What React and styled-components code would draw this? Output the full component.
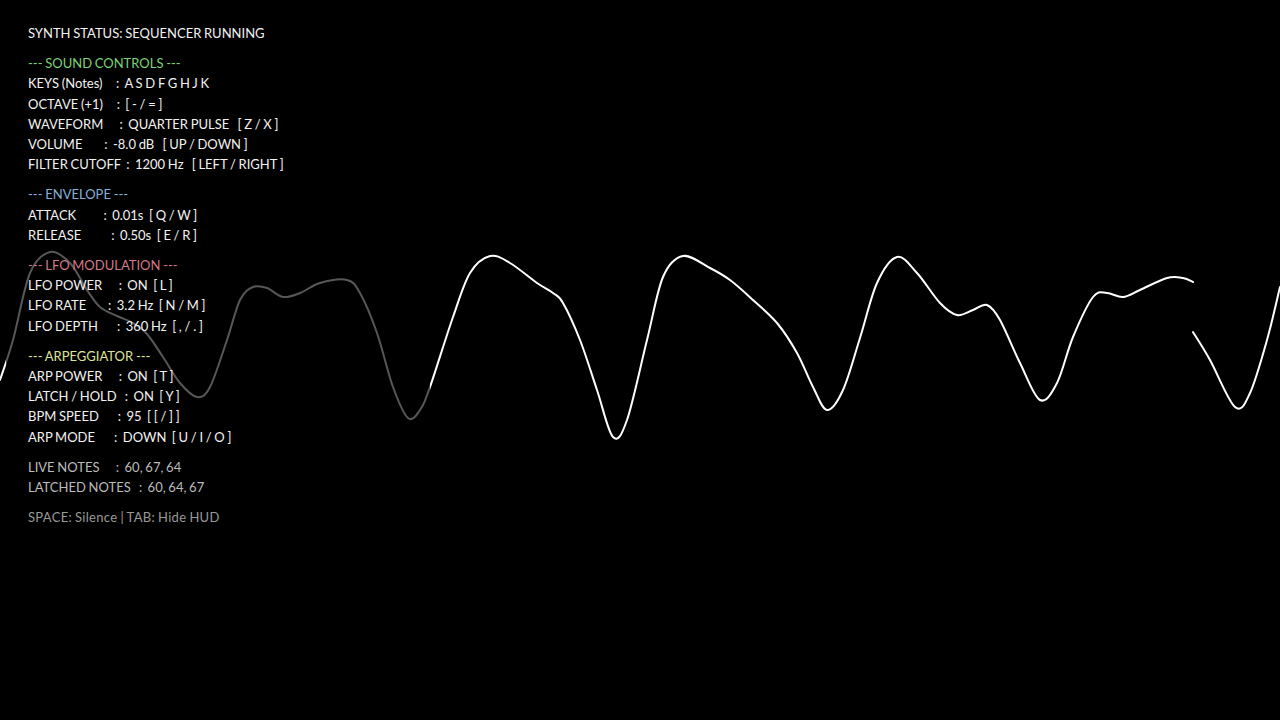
import React from "react";
import styled, { createGlobalStyle } from "styled-components";

const GlobalStyle = createGlobalStyle`
  html, body {
    margin: 0;
    padding: 0;
    background: #000;
  }
`;

const Screen = styled.div`
  position: relative;
  width: 100vw;
  height: 100vh;
  overflow: hidden;
  background: #000;
`;

const Scope = styled.svg`
  position: absolute;
  inset: 0;
  width: 100%;
  height: 100%;
`;

const Hud = styled.div`
  position: absolute;
  top: 6px;
  left: 6px;
  width: 380px;
  padding: 17px 22px 20px;
  background: rgba(0, 0, 0, 0.66);
  font-family: Lato, "Noto Sans", sans-serif;
  font-size: 13px;
  line-height: 20.2px;
  word-spacing: -0.6px;
  color: #f2f2f2;
`;

const Section = styled.div`
  margin-top: 10px;
`;

const Line = styled.div`
  white-space: pre;
  color: ${(p) => p.color || "#f2f2f2"};
  letter-spacing: ${(p) => (p.loose ? "0.3px" : "normal")};
`;

const sections = [
  {
    title: "--- SOUND CONTROLS ---",
    color: "#7ad27a",
    rows: [
      "KEYS (Notes)     :  A S D F G H J K",
      "OCTAVE (+1)     :  [ - / = ]",
      "WAVEFORM      :  QUARTER PULSE   [ Z / X ]",
      "VOLUME        :  -8.0 dB   [ UP / DOWN ]",
      "FILTER CUTOFF  :  1200 Hz   [ LEFT / RIGHT ]",
    ],
  },
  {
    title: "--- ENVELOPE ---",
    color: "#86b0d8",
    rows: [
      "ATTACK          :  0.01s  [ Q / W ]",
      "RELEASE           :  0.50s  [ E / R ]",
    ],
  },
  {
    title: "--- LFO MODULATION ---",
    color: "#d27a88",
    rows: [
      "LFO POWER      :  ON  [ L ]",
      "LFO RATE        :  3.2 Hz  [ N / M ]",
      "LFO DEPTH       :  360 Hz  [ , / . ]",
    ],
  },
  {
    title: "--- ARPEGGIATOR ---",
    color: "#dfe398",
    rows: [
      "ARP POWER      :  ON  [ T ]",
      "LATCH / HOLD   :  ON  [ Y ]",
      "BPM SPEED       :  95  [ [ / ] ]",
      "ARP MODE       :  DOWN  [ U / I / O ]",
    ],
  },
];

const front = [
  [0, 380], [13, 340], [30, 273], [50, 252], [70, 263], [87, 290], [100, 307],
  [117, 316], [133, 323], [147, 334], [163, 357], [180, 383], [197, 397],
  [210, 387], [227, 340], [240, 300], [253, 287], [267, 288], [283, 297],
  [300, 293], [320, 283], [347, 280], [360, 293], [377, 333], [393, 387],
  [408, 418], [420, 410], [430, 387], [453, 317], [470, 273], [490, 256],
  [510, 263], [537, 283], [553, 293], [563, 303], [580, 340], [597, 390],
  [613, 437], [627, 420], [647, 340], [663, 277], [683, 256], [710, 268],
  [730, 280], [753, 300], [777, 323], [797, 353], [813, 387], [827, 410],
  [843, 390], [860, 338], [877, 283], [897, 257], [917, 273], [940, 303],
  [957, 315], [973, 310], [987, 305], [1000, 320], [1020, 363], [1040, 400],
  [1057, 383], [1073, 337], [1093, 297], [1107, 293], [1123, 297],
  [1140, 290], [1167, 278], [1183, 278], [1193, 282],
];
const back = [
  [1193, 332], [1210, 360], [1235, 407], [1250, 393], [1267, 340], [1280, 287],
];

function smooth(pts) {
  let d = `M${pts[0][0]},${pts[0][1]}`;
  for (let i = 0; i < pts.length - 1; i++) {
    const p0 = pts[i - 1] || pts[i];
    const p1 = pts[i];
    const p2 = pts[i + 1];
    const p3 = pts[i + 2] || p2;
    const c1x = p1[0] + (p2[0] - p0[0]) / 6;
    const c1y = p1[1] + (p2[1] - p0[1]) / 6;
    const c2x = p2[0] - (p3[0] - p1[0]) / 6;
    const c2y = p2[1] - (p3[1] - p1[1]) / 6;
    d += ` C${c1x.toFixed(1)},${c1y.toFixed(1)} ${c2x.toFixed(1)},${c2y.toFixed(1)} ${p2[0]},${p2[1]}`;
  }
  return d;
}

function Waveform() {
  return (
    <Scope viewBox="0 0 1280 720" preserveAspectRatio="none">
      <g fill="none" stroke="#fff" strokeWidth="2" strokeLinecap="round" strokeLinejoin="round">
        <path d={smooth(front)} />
        <path d={smooth(back)} />
      </g>
    </Scope>
  );
}

export default function App() {
  return (
    <Screen>
      <GlobalStyle />
      <Waveform />
      <Hud>
        <Line>SYNTH STATUS: SEQUENCER RUNNING</Line>
        {sections.map((s) => (
          <Section key={s.title}>
            <Line color={s.color}>{s.title}</Line>
            {s.rows.map((r) => (
              <Line key={r}>{r}</Line>
            ))}
          </Section>
        ))}
        <Section>
          <Line color="#bcbcbc">LIVE NOTES      :  60, 67, 64</Line>
          <Line color="#bcbcbc">LATCHED NOTES   :  60, 64, 67</Line>
        </Section>
        <Section>
          <Line color="#999" loose>SPACE: Silence | TAB: Hide HUD</Line>
        </Section>
      </Hud>
    </Screen>
  );
}
